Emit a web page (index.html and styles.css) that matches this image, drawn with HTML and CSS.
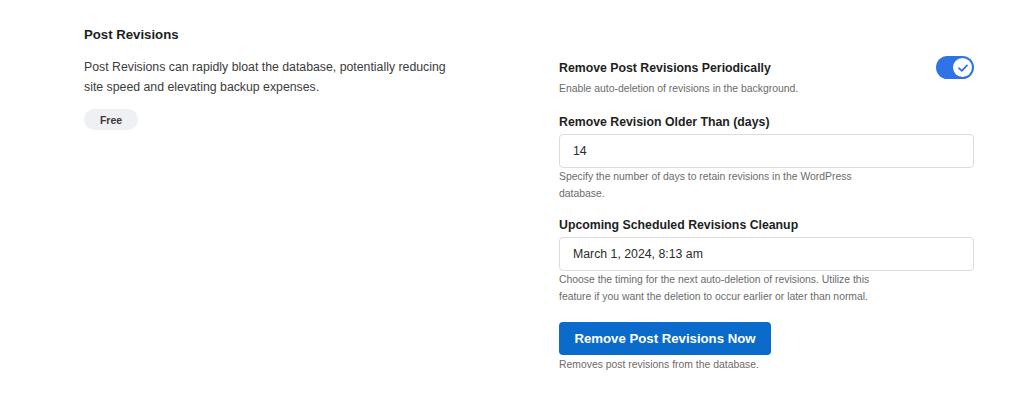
FILE: index.html
```html
<!DOCTYPE html>
<html>
<head>
<meta charset="utf-8">
<link rel="stylesheet" href="styles.css">
</head>
<body>
<div class="page">
  <div class="info">
    <h3 class="title">Post Revisions</h3>
    <p class="desc">Post Revisions can rapidly bloat the database, potentially reducing site speed and elevating backup expenses.</p>
    <span class="badge">Free</span>
  </div>
  <div class="settings">
    <div class="toggle-row">
      <div>
        <div class="label">Remove Post Revisions Periodically</div>
        <div class="help first">Enable auto-deletion of revisions in the background.</div>
      </div>
      <div class="toggle">
        <span class="knob">
          <svg width="12" height="10" viewBox="0 0 12 10"><path d="M2 5.2 L4.8 7.8 L10 2.4" fill="none" stroke="#2f73e6" stroke-width="1.8" stroke-linecap="round" stroke-linejoin="round"/></svg>
        </span>
      </div>
    </div>
    <div class="field">
      <div class="label">Remove Revision Older Than (days)</div>
      <div class="input">14</div>
      <div class="help">Specify the number of days to retain revisions in the WordPress database.</div>
    </div>
    <div class="field second">
      <div class="label">Upcoming Scheduled Revisions Cleanup</div>
      <div class="input">March 1, 2024, 8:13 am</div>
      <div class="help">Choose the timing for the next auto-deletion of revisions. Utilize this feature if you want the deletion to occur earlier or later than normal.</div>
    </div>
    <div class="action">
      <button class="btn">Remove Post Revisions Now</button>
      <div class="help">Removes post revisions from the database.</div>
    </div>
  </div>
</div>
</body>
</html>
```
FILE: styles.css
```css
* { box-sizing: border-box; }
body {
  margin: 0;
  background: #ffffff;
  font-family: "Liberation Sans", Arial, sans-serif;
  color: #1e1e1e;
}
.page {
  display: flex;
  padding: 25px 0 0 84px;
}
.info {
  width: 475px;
  display: flex;
  flex-direction: column;
  align-items: flex-start;
}
.title {
  margin: 0;
  font-size: 13.2px;
  line-height: 20px;
  font-weight: bold;
  color: #1e1e1e;
}
.desc {
  margin: 12px 0 0;
  width: 370px;
  font-size: 12.3px;
  line-height: 20px;
  color: #3c3c3c;
}
.badge {
  margin-top: 12px;
  display: inline-flex;
  align-items: center;
  justify-content: center;
  width: 54px;
  height: 21px;
  border-radius: 11px;
  background: #eef0f3;
  font-size: 10.5px;
  font-weight: bold;
  color: #3a3a3a;
}
.settings {
  width: 415px;
  margin-top: 33px;
  display: flex;
  flex-direction: column;
}
.toggle-row {
  display: flex;
  justify-content: space-between;
  align-items: flex-start;
}
.label {
  font-size: 12.3px;
  line-height: 20px;
  font-weight: bold;
  color: #1e1e1e;
}
.help {
  font-size: 10.4px;
  line-height: 17px;
  color: #6b6b6b;
  max-width: 320px;
}
.help.first { margin-top: 2px; }
.toggle {
  width: 38px;
  height: 23px;
  margin-top: -2px;
  border-radius: 12px;
  background: #2f73e6;
  display: flex;
  align-items: center;
  justify-content: flex-end;
  padding-right: 2px;
}
.knob {
  width: 19px;
  height: 19px;
  border-radius: 50%;
  background: #ffffff;
  display: flex;
  align-items: center;
  justify-content: center;
}
.field {
  margin-top: 15px;
}
.field.second {
  margin-top: 13px;
}
.input {
  margin-top: 2px;
  height: 34px;
  border: 1px solid #dcdcde;
  border-radius: 4px;
  padding: 0 13px;
  display: flex;
  align-items: center;
  font-size: 12.3px;
  color: #2c2c2c;
}
.action {
  margin-top: 17px;
}
.btn {
  display: block;
  width: 212px;
  height: 33px;
  border: none;
  border-radius: 4px;
  background: #0b6bcb;
  color: #ffffff;
  font-family: "Liberation Sans", Arial, sans-serif;
  font-size: 13.2px;
  font-weight: bold;
  padding: 0;
  margin-bottom: 1px;
}
```
